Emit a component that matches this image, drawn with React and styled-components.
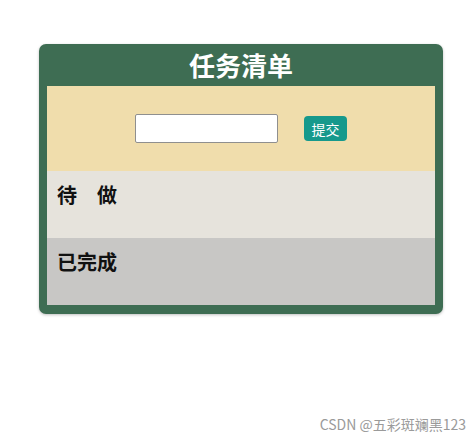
import styled, { createGlobalStyle } from "styled-components";

const GlobalStyle = createGlobalStyle`
  html, body {
    margin: 0;
    padding: 0;
    background: #ffffff;
    font-family: "Noto Sans CJK SC", "Noto Sans", sans-serif;
  }
`;

function App() {
  return (
    <Page>
      <GlobalStyle />
      <TodoBox>
        <Title>任务清单</Title>
        <InputSection>
          <TaskInput type="text" />
          <SubmitButton>提交</SubmitButton>
        </InputSection>
        <ListSection tone="#e6e3dc">
          <SectionTitle>待　做</SectionTitle>
        </ListSection>
        <ListSection tone="#c8c7c5">
          <SectionTitle>已完成</SectionTitle>
        </ListSection>
      </TodoBox>
      <Watermark>CSDN @五彩斑斓黑123</Watermark>
    </Page>
  );
}

export default App;

const Page = styled.div`
  position: relative;
  width: 474px;
  height: 440px;
  padding: 44px 0 0 39px;
  box-sizing: border-box;
`;

const TodoBox = styled.div`
  width: 404px;
  box-sizing: border-box;
  background: #3e6d53;
  border-radius: 7px;
  padding: 0 8px 9px 8px;
  box-shadow: 0 1px 3px rgba(0, 0, 0, 0.25);
  display: flex;
  flex-direction: column;
`;

const Title = styled.h1`
  margin: 0;
  height: 42px;
  line-height: 42px;
  text-align: center;
  color: #ffffff;
  font-size: 26px;
  font-weight: 700;
`;

const InputSection = styled.div`
  height: 85px;
  background: #f0ddac;
  display: flex;
  align-items: center;
  justify-content: center;
  gap: 26px;
`;

const TaskInput = styled.input`
  width: 143px;
  height: 29px;
  box-sizing: border-box;
  border: 1px solid #8f8f8f;
  border-radius: 2px;
  background: #ffffff;
  padding: 0 4px;
  outline: none;
`;

const SubmitButton = styled.button`
  width: 43px;
  height: 25px;
  border: none;
  border-radius: 4px;
  background: #16998c;
  color: #ffffff;
  font-family: "Noto Sans CJK SC", sans-serif;
  font-size: 14px;
  padding: 0;
  cursor: pointer;
`;

const ListSection = styled.div`
  height: 67px;
  background: ${(p) => p.tone};
  padding: 12px 10px 0;
  box-sizing: border-box;
`;

const SectionTitle = styled.h3`
  margin: 0;
  font-size: 20px;
  line-height: 24px;
  font-weight: 700;
  color: #111111;
`;

const Watermark = styled.div`
  position: absolute;
  right: 8px;
  bottom: 6px;
  color: #9a9a9a;
  font-family: "Noto Sans CJK SC", sans-serif;
  font-size: 14px;
`;
